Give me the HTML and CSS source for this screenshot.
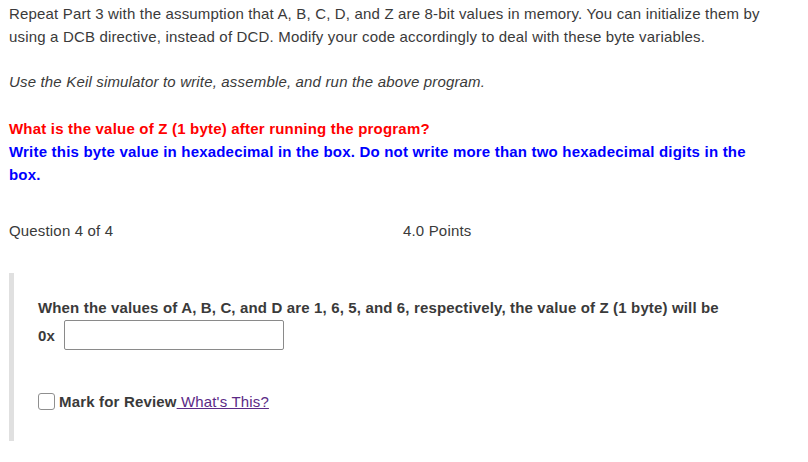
FILE: index.html
```html
<!DOCTYPE html>
<html>
<head>
<meta charset="utf-8">
<link rel="stylesheet" href="styles.css">
</head>
<body>
<div class="intro">
<p class="text">Repeat Part 3 with the assumption that A, B, C, D, and Z are 8-bit values in memory. You can initialize them by using a DCB directive, instead of DCD. Modify your code accordingly to deal with these byte variables.</p>
<p class="text italic">Use the Keil simulator to write, assemble, and run the above program.</p>
<p class="text bold"><span class="red">What is the value of Z (1 byte) after running the program?</span><br><span class="blue">Write this byte value in hexadecimal in the box. Do not write more than two hexadecimal digits in the box.</span></p>
</div>
<div class="qhead">
<div class="num">Question 4 of 4</div>
<div class="pts">4.0 Points</div>
</div>
<div class="panel">
<div class="qtext">When the values of A, B, C, and D are 1, 6, 5, and 6, respectively, the value of Z (1 byte) will be</div>
<div class="answer"><span class="ox">0x</span><input class="box" type="text"></div>
<div class="review"><span class="check"></span><span class="mark">Mark for Review</span><a class="link" href="#">&nbsp;What's This?</a></div>
</div>
</body>
</html>
```
FILE: styles.css
```css
body {
  margin: 2px 8px 8px;
  font-family: "Liberation Sans", Arial, sans-serif;
  font-size: 15px;
  letter-spacing: 0.17px;
  color: #3a3a3a;
  background: #fff;
}
.text {
  margin: 0 0 22px 1px;
  line-height: 23px;
  max-width: 770px;
}
.italic { font-style: italic; margin-bottom: 24px; }
.bold { font-weight: bold; letter-spacing: 0.2px; max-width: 745px; }
.red { color: #ff0000; }
.blue { color: #0000ff; }
.qhead {
  display: flex;
  margin-top: 33px;
  line-height: 23px;
  font-size: 15px;
}
.num { width: 394px; padding-left: 1px; }
.pts { flex: 1; }
.panel {
  margin-top: 31px;
  margin-left: 1px;
  border-left: 5px solid #e0e0e0;
  padding: 24px 0 31px 24px;
}
.qtext {
  font-weight: bold;
  font-size: 15px;
  letter-spacing: 0.15px;
  line-height: 22px;
}
.answer {
  display: flex;
  align-items: center;
  margin-top: 1px;
}
.ox { font-weight: bold; font-size: 15px; margin-right: 9px; }
.box {
  width: 220px;
  height: 30px;
  box-sizing: border-box;
  border: 1px solid #8a8a8a;
  border-radius: 2px;
  padding: 0;
  margin: 0;
}
.review {
  display: flex;
  align-items: center;
  margin-top: 43px;
  font-size: 15px;
  height: 17px;
}
.check {
  width: 17px;
  height: 17px;
  box-sizing: border-box;
  border: 1px solid #8f8f8f;
  border-radius: 3px;
  margin-right: 4px;
}
.mark { font-weight: bold; }
.link {
  color: #5b2a86;
  text-decoration: underline;
}
```
